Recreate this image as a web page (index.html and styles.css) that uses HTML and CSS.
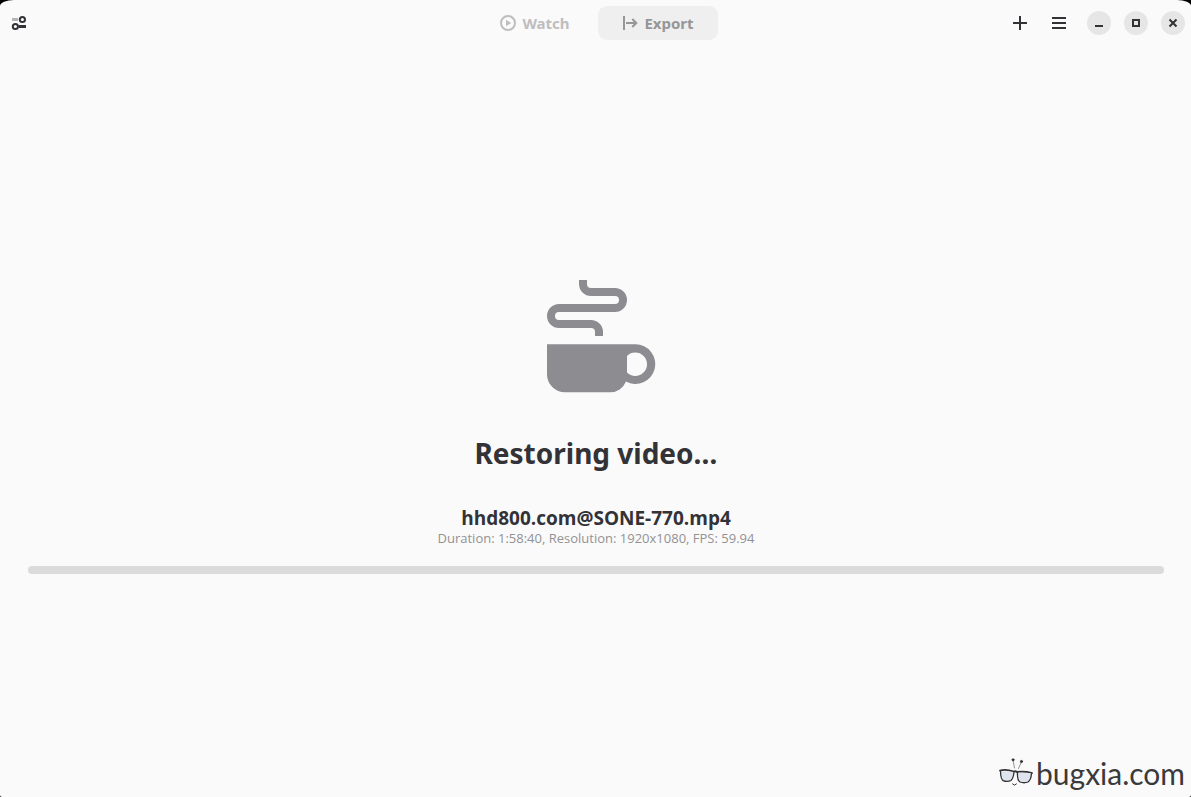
FILE: index.html
```html
<!DOCTYPE html>
<html lang="en">
<head>
<meta charset="utf-8">
<title>Restoring video</title>
<link rel="stylesheet" href="styles.css">
</head>
<body>
<div class="window">
  <header class="bar">
    <div class="side">
      <button class="tool" aria-label="Preferences">
        <svg width="16" height="16" viewBox="0 0 16 16" fill="none" stroke="currentColor" stroke-width="2"><path d="M1 4.5h6" stroke="#b5b5b6" stroke-width="3"/><circle cx="11.4" cy="4.5" r="2.6"/><circle cx="4.4" cy="11.5" r="2.6"/><path d="M8 11.5h7" stroke-width="3"/></svg>
      </button>
    </div>
    <nav class="tabs">
      <button class="tab">
        <svg width="16" height="16" viewBox="0 0 16 16"><circle cx="8" cy="8" r="7" fill="none" stroke="currentColor" stroke-width="2"/><path d="M6 4.8v6.4L11.2 8z" fill="currentColor"/></svg>
        Watch</button>
      <button class="tab active">
        <svg width="16" height="16" viewBox="0 0 16 16" fill="none" stroke="currentColor" stroke-width="2"><path d="M2 1v14M4 8h10M10.3 4l4 4-4 4"/></svg>
        Export</button>
    </nav>
    <div class="side end">
      <button class="tool" aria-label="Add files">
        <svg width="16" height="16" viewBox="0 0 16 16" stroke="currentColor" stroke-width="2"><path d="M8 1v14M1 8h14"/></svg>
      </button>
      <button class="tool" aria-label="Menu">
        <svg width="16" height="16" viewBox="0 0 16 16" stroke="currentColor" stroke-width="2"><path d="M1 3h14M1 8h14M1 13h14"/></svg>
      </button>
      <div class="controls">
        <button class="round" aria-label="Minimize"><svg width="16" height="16" viewBox="0 0 16 16"><path d="M4 10h8v2H4z" fill="currentColor"/></svg></button>
        <button class="round" aria-label="Maximize"><svg width="16" height="16" viewBox="0 0 16 16"><path d="M5 5h6v6H5z" fill="none" stroke="currentColor" stroke-width="2"/></svg></button>
        <button class="round" aria-label="Close"><svg width="16" height="16" viewBox="0 0 16 16"><path d="M4.5 4.5l7 7M11.5 4.5l-7 7" stroke="currentColor" stroke-width="2"/></svg></button>
      </div>
    </div>
  </header>
  <main class="status">
    <svg class="cup" width="128" height="128" viewBox="0 0 128 128" aria-hidden="true">
      <path d="M51 8v4a8 8 0 0 0 8 8H83a8 8 0 0 1 0 16H27a8 8 0 0 0 0 16H59a8 8 0 0 1 8 8v4" fill="none" stroke="currentColor" stroke-width="8"/>
      <path fill="currentColor" d="M15 72.300H103.500A19.800 19.800 0 1 1 94 109.500A17 17 0 0 1 78 120.300H33A18 18 0 0 1 15 102.300ZM95 84V100.500A11.700 11.700 0 1 0 95 84Z" fill-rule="evenodd"/>
    </svg>
    <h1 class="title">Restoring video…</h1>
    <h2 class="file">hhd800.com@SONE-770.mp4</h2>
    <p class="meta">Duration: 1:58:40, Resolution: 1920x1080, FPS: 59.94</p>
    <progress class="progress" value="0" max="100" aria-label="Restoring video"></progress>
  </main>
  <div class="mark">
    <svg width="36" height="30" viewBox="0 0 36 30" fill="none" stroke="#333" stroke-linecap="round"><path d="M2 12.500Q8 11 16 13.500Q17.500 12.800 19 14Q27 13 34 15" stroke-width="1.800"/><path d="M2.500 13Q2.500 22 6 23Q10 24 13 22.500Q15.500 20 16 14M19.500 14.500Q19 22 22 24Q26 25.500 30 24Q33 22 33.500 15.500" fill="#dfe3ee" stroke-width="1.300"/><path d="M16.500 10L15 2M20.500 10.500L23.500 3.500" stroke="#777" stroke-width=".8"/><circle cx="15" cy="1.800" r="1" fill="#333"/><circle cx="23.500" cy="3.500" r="1.100" fill="#333"/><path d="M14.500 26Q16.500 28.500 18.500 26" stroke-width="1"/></svg>
    <span>bugxia.com</span>
  </div>
</div>
</body>
</html>
```
FILE: styles.css
```css
* { box-sizing: border-box; }
body {
  margin: 0;
  background: #000;
  color: #323237;
  font-family: "Noto Sans", "Open Sans", sans-serif;
}
.window {
  position: relative;
  display: flex;
  flex-direction: column;
  min-height: 100vh;
  background: #fafafb;
  border-radius: 14px 14px 2px 2px / 6px 6px 2px 2px;
}
.bar {
  display: grid;
  grid-template-columns: 1fr auto 1fr;
  align-items: center;
  height: 46px;
  padding: 0 6px 0 8px;
}
button {
  display: flex;
  align-items: center;
  justify-content: center;
  padding: 0;
  border: 0;
  background: none;
  color: inherit;
  font: inherit;
}
.side { display: flex; align-items: center; }
.end { justify-content: flex-end; gap: 17px; }
.tool { width: 22px; height: 34px; }
.tabs { display: flex; gap: 3px; }
.tab {
  gap: 6px;
  width: 120px;
  height: 34px;
  border-radius: 9px;
  color: #bebebf;
  font-size: 15px;
  font-weight: 700;
}
.active { background: #efefef; color: #969697; }
.controls { display: flex; gap: 13px; }
.round {
  width: 24px;
  height: 24px;
  border-radius: 50%;
  background: #e6e6e6;
}
.status {
  flex: 1;
  display: flex;
  flex-direction: column;
  align-items: center;
  justify-content: center;
  padding: 3px 27px 0 28px;
  text-align: center;
}
.cup { color: #8d8c91; }
.title {
  margin: 33px 0 0;
  font-size: 28px;
  line-height: 40px;
}
.file {
  margin: 33px 0 0;
  font-family: "Open Sans", sans-serif;
  font-size: 19px;
  line-height: 24px;
}
.meta {
  margin: 0;
  font-family: "Open Sans", sans-serif;
  font-size: 13px;
  line-height: 16px;
  color: #929293;
}
.progress {
  width: 100%;
  height: 8px;
  margin-top: 20px;
  appearance: none;
  border: 0;
  border-radius: 4px;
  overflow: hidden;
  background: #dbdbdb;
}
.progress::-webkit-progress-bar { background: #dbdbdb; }
.progress::-webkit-progress-value { background: #3584e4; }
.mark {
  position: absolute;
  right: 6px;
  bottom: 4px;
  display: flex;
  align-items: center;
  gap: 2px;
  color: #3a3a3a;
  font-family: Lato, sans-serif;
  font-size: 30px;
  line-height: 40px;
}
```
